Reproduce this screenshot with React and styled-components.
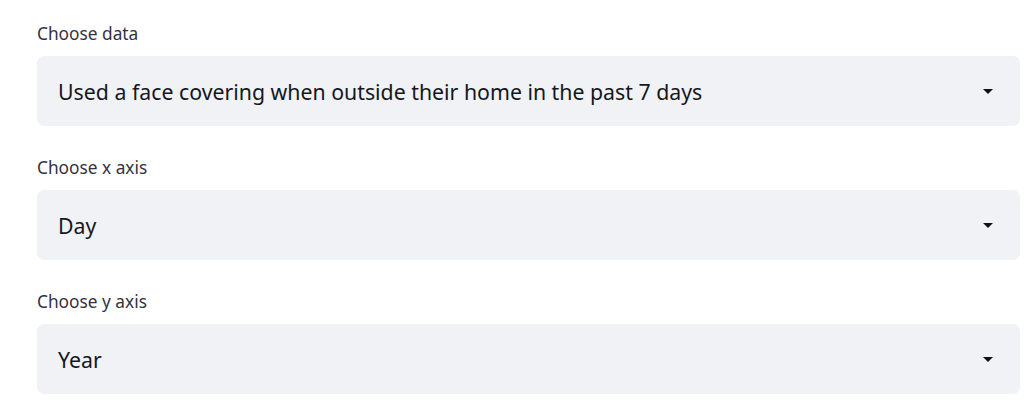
import React from "react";
import styled, { createGlobalStyle } from "styled-components";

const Global = createGlobalStyle`
  html, body { margin: 0; padding: 0; background: #ffffff; }
  body { font-family: "Noto Sans", "Open Sans", sans-serif; color: rgb(49, 51, 63); }
`;

const Page = styled.div`
  padding: 22px 15px 0 37px;
  width: 983px;
  display: flex;
  flex-direction: column;
  gap: 30px;
`;

const Field = styled.div`
  display: flex;
  flex-direction: column;
  gap: 10px;
`;

const Label = styled.label`
  height: 24px;
  line-height: 24px;
  font-size: 17.3px;
  color: rgb(49, 51, 63);
  white-space: nowrap;
`;

const Select = styled.div`
  height: 70px;
  box-sizing: border-box;
  background: #f0f2f6;
  border-radius: 7px;
  display: flex;
  align-items: center;
  justify-content: space-between;
  padding: 0 27px 0 21px;
`;

const Value = styled.span`
  font-size: 21.3px;
  color: #16171c;
  white-space: nowrap;
`;

const Caret = () => (
  <svg width="10" height="5" viewBox="0 0 10 5" aria-hidden="true">
    <path d="M0 0 L10 0 L5 5 Z" fill="#111" />
  </svg>
);

const fields = [
  { label: "Choose data", value: "Used a face covering when outside their home in the past 7 days" },
  { label: "Choose x axis", value: "Day" },
  { label: "Choose y axis", value: "Year" },
];

export default function App() {
  return (
    <>
      <Global />
      <Page>
        {fields.map((f) => (
          <Field key={f.label}>
            <Label>{f.label}</Label>
            <Select>
              <Value>{f.value}</Value>
              <Caret />
            </Select>
          </Field>
        ))}
      </Page>
    </>
  );
}
